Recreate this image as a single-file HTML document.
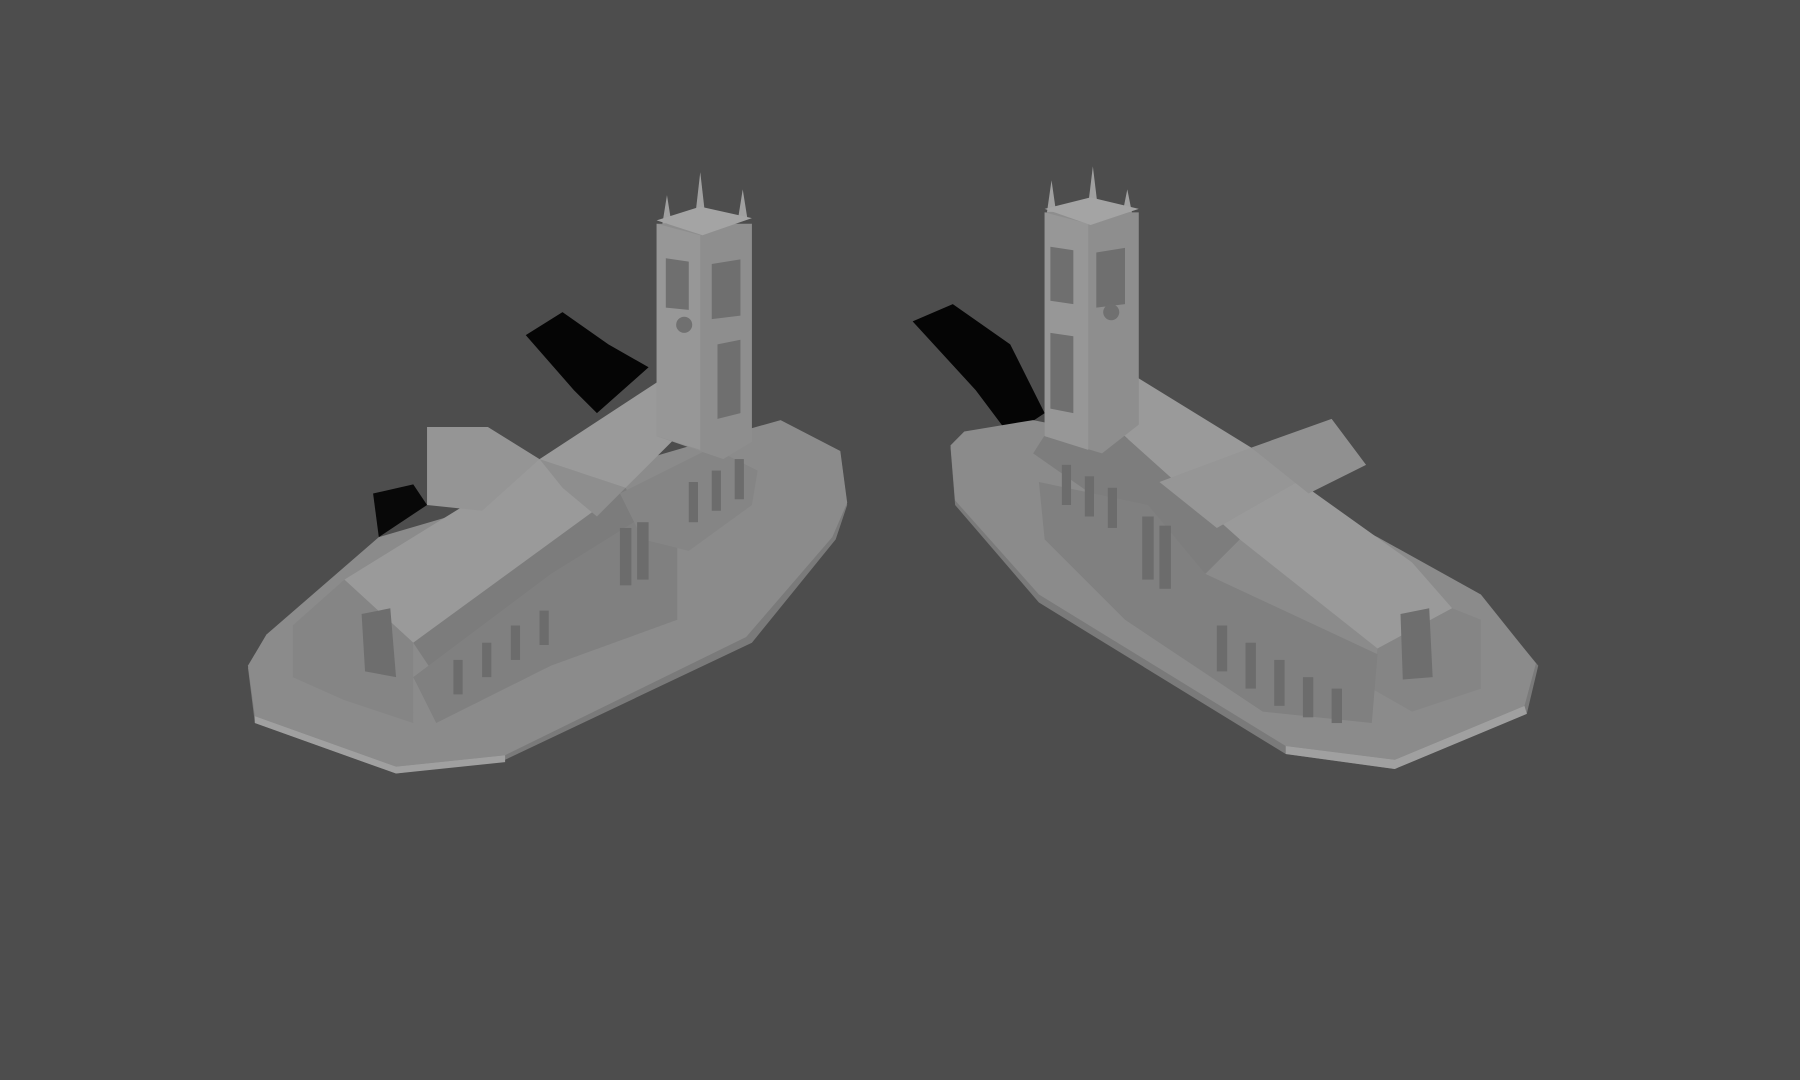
<!DOCTYPE html>
<html><head><meta charset="utf-8"><style>
html,body{margin:0;padding:0;background:#4d4d4d;width:1800px;height:1080px;overflow:hidden}
svg{display:block}
</style></head><body>
<svg width="1800" height="1080" viewBox="0 0 1568 941" preserveAspectRatio="none" xmlns="http://www.w3.org/2000/svg">
<rect width="1568" height="941" fill="#4d4d4d"/>
<!-- LEFT -->
<polygon points="458,292 490,272 530,300 565,320 520,360 500,340" fill="#050505"/>
<polygon points="325,430 360,422 372,440 330,468" fill="#080808"/>
<polygon points="216,582 222,630 345,674 440,662 655,560 728,470 738,440 732,395 680,368 620,385 330,470 232,555" fill="#7a7a7a"/>
<polygon points="216,580 232,553 330,468 620,383 680,366 732,393 738,438 725,468 650,555 440,658 345,668 222,624" fill="#8b8b8b"/>
<polygon points="222,624 345,668 440,658 440,664 345,674 222,630" fill="#a0a0a0"/>
<!-- nave roof -->
<polygon points="300,505 470,400 600,315 625,345 545,425 360,560" fill="#9a9a9a"/>
<polygon points="360,560 545,425 560,455 380,590" fill="#7c7c7c"/>
<!-- transept -->
<polygon points="372,372 425,372 470,400 420,445 372,440" fill="#959595"/>
<polygon points="470,400 545,425 520,450 490,425" fill="#8e8e8e"/>
<!-- front wall -->
<polygon points="255,545 300,505 360,560 360,630 300,610 255,590" fill="#858585"/>
<polygon points="315,535 340,530 345,590 318,585" fill="#6e6e6e"/>
<!-- aisle buildings -->
<polygon points="360,590 480,500 560,450 590,470 590,540 480,580 380,630" fill="#808080"/>
<polygon points="540,430 620,390 660,410 655,440 600,480 560,470" fill="#858585"/>
<!-- tower -->
<polygon points="572,195 655,195 655,385 630,400 572,380" fill="#8e8e8e"/>
<polygon points="572,195 610,205 610,392 572,380" fill="#979797"/>
<polygon points="580,225 600,228 600,270 580,268" fill="#6f6f6f"/>
<polygon points="620,230 645,226 645,275 620,278" fill="#6f6f6f"/>
<polygon points="625,300 645,296 645,360 625,365" fill="#6f6f6f"/>
<circle cx="596" cy="283" r="7" fill="#707070"/>
<polygon points="577,195 581,170 585,195" fill="#a0a0a0"/>
<polygon points="606,185 610,150 614,185" fill="#a0a0a0"/>
<polygon points="643,190 647,165 651,190" fill="#a0a0a0"/>
<polygon points="572,192 610,180 655,190 612,205" fill="#a4a4a4"/>
<!-- window details -->
<g fill="#6c6c6c">
<rect x="395" y="575" width="8" height="30"/><rect x="420" y="560" width="8" height="30"/><rect x="445" y="545" width="8" height="30"/><rect x="470" y="532" width="8" height="30"/>
<rect x="600" y="420" width="8" height="35"/><rect x="620" y="410" width="8" height="35"/><rect x="640" y="400" width="8" height="35"/>
<rect x="540" y="460" width="10" height="50"/><rect x="555" y="455" width="10" height="50"/>
</g>
<!-- RIGHT -->
<polygon points="795,280 830,265 880,300 910,360 880,380 850,340" fill="#050505"/>
<polygon points="828,390 832,440 905,525 1120,657 1215,670 1330,622 1340,580 1290,520 1200,470 1060,400 900,368 840,378" fill="#7a7a7a"/>
<polygon points="828,388 840,376 900,366 1060,398 1200,468 1290,518 1338,578 1328,615 1215,662 1120,650 905,518 832,436" fill="#8b8b8b"/>
<polygon points="1120,650 1215,662 1328,615 1330,622 1215,670 1120,657" fill="#a0a0a0"/>
<!-- nave roof -->
<polygon points="935,340 960,310 1090,390 1230,490 1265,530 1200,565 1080,470" fill="#9a9a9a"/>
<polygon points="900,395 935,340 1080,470 1050,500" fill="#7d7d7d"/>
<!-- transept -->
<polygon points="1010,420 1090,390 1130,420 1060,460" fill="#969696"/>
<polygon points="1090,390 1160,365 1190,405 1140,430" fill="#909090"/>
<!-- front gable wall -->
<polygon points="1200,565 1265,530 1290,540 1290,600 1230,620 1195,600" fill="#858585"/>
<polygon points="1220,535 1245,530 1248,590 1222,592" fill="#6e6e6e"/>
<!-- aisle -->
<polygon points="905,420 1000,440 1050,500 1200,570 1195,630 1100,620 980,540 910,470" fill="#808080"/>
<!-- tower -->
<polygon points="910,185 992,185 992,370 960,395 910,380" fill="#8e8e8e"/>
<polygon points="910,185 948,195 948,392 910,380" fill="#979797"/>
<polygon points="915,215 935,218 935,265 915,262" fill="#6f6f6f"/>
<polygon points="955,220 980,216 980,265 955,268" fill="#6f6f6f"/>
<polygon points="915,290 935,293 935,360 915,356" fill="#6f6f6f"/>
<circle cx="968" cy="272" r="7" fill="#707070"/>
<polygon points="912,185 916,157 920,185" fill="#a0a0a0"/>
<polygon points="948,178 952,145 956,178" fill="#a0a0a0"/>
<polygon points="978,185 982,165 986,185" fill="#a0a0a0"/>
<polygon points="910,182 950,172 992,182 950,196" fill="#a4a4a4"/>
<g fill="#6c6c6c">
<rect x="925" y="405" width="8" height="35"/><rect x="945" y="415" width="8" height="35"/><rect x="965" y="425" width="8" height="35"/>
<rect x="1060" y="545" width="9" height="40"/><rect x="1085" y="560" width="9" height="40"/><rect x="1110" y="575" width="9" height="40"/><rect x="1135" y="590" width="9" height="35"/><rect x="1160" y="600" width="9" height="30"/>
<rect x="995" y="450" width="10" height="55"/><rect x="1010" y="458" width="10" height="55"/>
</g>
</svg>
</body></html>
